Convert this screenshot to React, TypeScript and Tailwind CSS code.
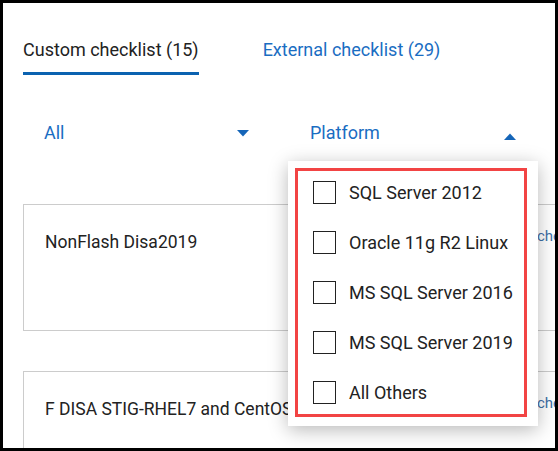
const platforms = [
  "SQL Server 2012",
  "Oracle 11g R2 Linux",
  "MS SQL Server 2016",
  "MS SQL Server 2019",
  "All Others",
];

const cards = [
  { name: "NonFlash Disa2019", h: "h-[127px]" },
  { name: "F DISA STIG-RHEL7 and CentOS 7", h: "h-[127px]" },
];

function Caret({ up }: { up?: boolean }) {
  return (
    <svg width="12" height="7" viewBox="0 0 12 7" className="shrink-0">
      <path d={up ? "M0 7 L6 0.5 L12 7 Z" : "M0 0 L6 6.5 L12 0 Z"} fill="#1565b8" />
    </svg>
  );
}

export default function App() {
  return (
    <div
      className="relative w-[558px] h-[451px] overflow-hidden border-[3px] border-black bg-white text-[#222]"
      style={{ fontFamily: "Roboto, 'Liberation Sans', sans-serif" }}
    >
      {/* Tabs */}
      <div className="flex gap-[64px] pl-[20px] pt-[35px]">
        <div className="flex flex-col">
          <span className="text-[18px] leading-[24px] text-[#222]">Custom checklist (15)</span>
          <div className="mt-[10px] h-[3px] bg-[#0b62b0]" />
        </div>
        <span className="text-[18px] leading-[24px] text-[#1a6dc2]">External checklist (29)</span>
      </div>

      {/* Filters */}
      <div className="flex pt-[46px]">
        <div className="ml-[41px] flex w-[205px] items-center justify-between">
          <span className="text-[18px] leading-[24px] text-[#1a6dc2]">All</span>
          <span className="pt-[1px]">
            <Caret />
          </span>
        </div>
        <div className="ml-[61px] flex w-[206px] items-center justify-between">
          <span className="text-[18px] leading-[24px] text-[#1a6dc2]">Platform</span>
          <span className="pt-[6px]">
            <Caret up />
          </span>
        </div>
      </div>

      {/* Cards */}
      <div className="mt-[59px] ml-[20px] flex flex-col gap-[40px]">
        {cards.map((c) => (
          <div key={c.name} className={`flex w-[620px] shrink-0 border border-[#cccccc] ${c.h}`}>
            <div className="w-[513px] shrink-0 pl-[21px] pt-[25px] text-[17.5px] leading-[24px] whitespace-nowrap">
              {c.name}
            </div>
            <div className="pt-[19px] text-[15px] leading-[24px] text-[#3d6fa6] whitespace-nowrap">checklist</div>
          </div>
        ))}
      </div>

      {/* Platform dropdown */}
      <div className="absolute left-[285px] top-[158px] w-[250px] h-[265px] bg-white p-[7px] shadow-[0_4px_18px_rgba(0,0,0,0.28)]">
        <div className="w-[232px] border-[3px] border-[#f24444] px-[15px] pt-[10px] pb-[10px] flex flex-col gap-[27px]">
          {platforms.map((p) => (
            <label key={p} className="flex h-[23px] items-center gap-[13px]">
              <span className="h-[23px] w-[23px] shrink-0 border-[1.5px] border-[#222] bg-white" />
              <span className="text-[18px] leading-[24px] text-[#222] whitespace-nowrap">{p}</span>
            </label>
          ))}
        </div>
      </div>
    </div>
  );
}
